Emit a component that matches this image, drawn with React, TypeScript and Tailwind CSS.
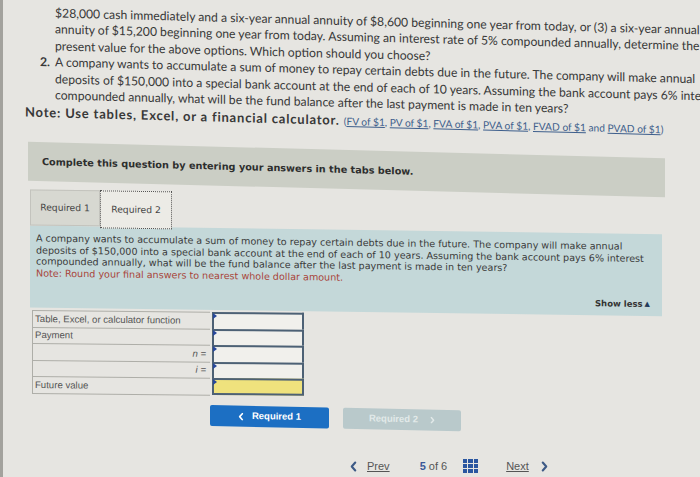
import React from 'react';

const topLines = [
    '$28,000 cash immediately and a six-year annual annuity of $8,600 beginning one year from today, or (3) a six-year annual',
    'annuity of $15,200 beginning one year from today. Assuming an interest rate of 5% compounded annually, determine the',
    'present value for the above options. Which option should you choose?',
];

const item2Lines = [
    'A company wants to accumulate a sum of money to repay certain debts due in the future. The company will make annual',
    'deposits of $150,000 into a special bank account at the end of each of 10 years. Assuming the bank account pays 6% interest',
    'compounded annually, what will be the fund balance after the last payment is made in ten years?',
];

const links = ['FV of $1', 'PV of $1', 'FVA of $1', 'PVA of $1'];

const rows = [
    { label: 'Table, Excel, or calculator function', right: false },
    { label: 'Payment', right: false },
    { label: 'n =', right: true },
    { label: 'i =', right: true },
    { label: 'Future value', right: false },
];

function Chevron({ dir, className }: { dir: 'left' | 'right'; className?: string }) {
    return (
        <svg viewBox="0 0 8 12" className={className} fill="none" stroke="currentColor" strokeWidth="2.4" strokeLinecap="round" strokeLinejoin="round">
            {dir === 'left' ? <path d="M6 1.5 L2 6 L6 10.5" /> : <path d="M2 1.5 L6 6 L2 10.5" />}
        </svg>
    );
}

function GridIcon() {
    return (
        <div className="grid grid-cols-3 gap-[1px] w-[15px] h-[14px]">
            {Array.from({ length: 9 }).map((_, i) => (
                <div key={i} className="bg-[#2a56a0]" />
            ))}
        </div>
    );
}

export default function App() {
    return (
        <div className="w-[700px] h-[477px] overflow-hidden bg-[#e6e5e1] border-l-[3px] border-[#a3a29d] font-['Lato',sans-serif]">
            {/* question text + banner */}
            <div className="origin-left skew-y-[1.5deg]">
                <div className="pt-[4px] text-[12.2px] leading-[16.4px] text-[#383838] whitespace-nowrap">
                    {topLines.map((l) => (
                        <div key={l} className="pl-[52px]">{l}</div>
                    ))}
                    {item2Lines.map((l, i) => (
                        <div key={l} className="flex">
                            <span className="w-[52px] shrink-0 pl-[37px] font-bold">{i === 0 ? '2.' : ''}</span>
                            <span>{l}</span>
                        </div>
                    ))}
                </div>
                <div className="pl-[22px] leading-[16px] text-[#383838] whitespace-nowrap">
                    <span className="font-bold text-[13px] tracking-[0.8px]">Note: Use tables, Excel, or a financial calculator.</span>{' '}
                    <span className="text-[#3e5f8c] text-[10.2px]">
                        (
                        {links.map((l) => (
                            <span key={l}>
                                <span className="underline">{l}</span>,{' '}
                            </span>
                        ))}
                        <span className="underline">FVAD of $1</span> and <span className="underline">PVAD of $1</span>)
                    </span>
                </div>
                <div className="mt-[21px] ml-[25px] w-[637px] h-[39px] bg-[#cbcec5] pl-[14px] flex items-center">
                    <span className="font-['DejaVu_Sans',sans-serif] font-bold text-[9.7px] text-[#2e2e2e]">
                        Complete this question by entering your answers in the tabs below.
                    </span>
                </div>
            </div>

            {/* tabs + prompt */}
            <div className="origin-left skew-y-[0.8deg] font-['DejaVu_Sans',sans-serif]">
                <div className="mt-[9px] ml-[27px] flex items-start h-[36px]">
                    <div className="w-[70px] h-[36px] bg-[#d7d8d1] border border-[#c3c3bd] flex items-center justify-center text-[9.2px] text-[#444]">
                        Required 1
                    </div>
                    <div className="w-[72px] h-[38px] bg-[#ecebe6] border border-dotted border-[#555] flex items-center justify-center text-[9.2px] text-[#444] relative z-10">
                        Required 2
                    </div>
                </div>
                <div className="ml-[27px] w-[632px] h-[82px] bg-[#c4d8d9] pt-[7px] pl-[6px] pr-[12px] text-[9.6px] leading-[11.5px] text-[#3a3a3a] whitespace-nowrap">
                    {item2Lines.map((l) => (
                        <div key={l}>{l}</div>
                    ))}
                    <div className="text-[#a8453a]">Note: Round your final answers to nearest whole dollar amount.</div>
                    <div className="mt-[12px] flex justify-end items-center gap-[2px] font-bold text-[8.5px] leading-[11px] text-[#333]">
                        Show less<span className="text-[7px] text-[#243b5a]">▲</span>
                    </div>
                </div>
            </div>

            {/* answer table */}
            <div className="origin-left skew-y-[0.6deg] mt-[3px] ml-[29px] flex font-['Liberation_Sans',sans-serif]">
                <div className="w-[178px] border-l border-t border-[#aeaea8]">
                    {rows.map((r) => (
                        <div
                            key={r.label}
                            className={`h-[16.6px] border-b border-[#aeaea8] flex items-center px-[2px] text-[9.6px] text-[#555] ${r.right ? 'justify-end pr-[4px] italic' : ''}`}
                        >
                            {r.label}
                        </div>
                    ))}
                </div>
                <div className="w-[92px] ml-[2px]">
                    {rows.map((r, i) => (
                        <div
                            key={r.label}
                            className={`relative h-[16.6px] border-x-2 border-t-2 border-[#4d6175] ${i === rows.length - 1 ? 'border-b-2 bg-[#efe27d]' : 'bg-[#f1f0ec]'}`}
                        >
                            <span className="absolute -left-[1px] -top-[1px] w-0 h-0 border-y-[3px] border-y-transparent border-l-[4px] border-l-[#27479a]" />
                        </div>
                    ))}
                </div>
            </div>

            {/* tab buttons */}
            <div className="origin-left skew-y-[1.2deg] mt-[11px] ml-[207px] flex gap-[14px] font-['Liberation_Sans',sans-serif]">
                <div className="w-[119px] h-[21px] bg-[#1c6fc3] rounded-[2px] flex items-center justify-center gap-[8px] text-white font-bold text-[9.5px]">
                    <Chevron dir="left" className="w-[6px] h-[8px]" />
                    Required 1
                </div>
                <div className="w-[118px] h-[21px] bg-[#b9c9cb] rounded-[2px] flex items-center justify-center gap-[12px] text-[#e2e9e9] font-bold text-[9.5px]">
                    Required 2
                    <Chevron dir="right" className="w-[5px] h-[7px]" />
                </div>
            </div>

            {/* bottom nav */}
            <div className="mt-[32px] ml-[347px] h-[16px] flex items-center font-['Liberation_Sans',sans-serif] text-[11px] text-[#555]">
                <Chevron dir="left" className="w-[7px] h-[11px] text-[#3d5a86]" />
                <span className="ml-[10px] underline">Prev</span>
                <span className="ml-[30px]">
                    <span className="font-bold text-[#3b5998]">5</span> of 6
                </span>
                <span className="ml-[16px]">
                    <GridIcon />
                </span>
                <span className="ml-[28px] underline">Next</span>
                <Chevron dir="right" className="ml-[12px] w-[7px] h-[11px] text-[#3d5a86]" />
            </div>
        </div>
    );
}
